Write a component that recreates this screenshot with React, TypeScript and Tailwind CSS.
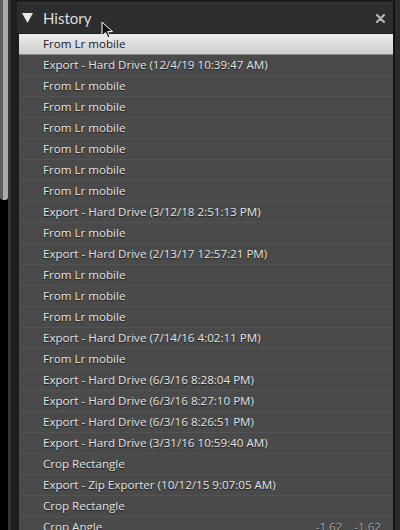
import React from "react";

const rows: { t: string; v?: [string, string] }[] = [
  { t: "From Lr mobile" },
  { t: "Export - Hard Drive (12/4/19 10:39:47 AM)" },
  { t: "From Lr mobile" },
  { t: "From Lr mobile" },
  { t: "From Lr mobile" },
  { t: "From Lr mobile" },
  { t: "From Lr mobile" },
  { t: "From Lr mobile" },
  { t: "Export - Hard Drive (3/12/18 2:51:13 PM)" },
  { t: "From Lr mobile" },
  { t: "Export - Hard Drive (2/13/17 12:57:21 PM)" },
  { t: "From Lr mobile" },
  { t: "From Lr mobile" },
  { t: "From Lr mobile" },
  { t: "Export - Hard Drive (7/14/16 4:02:11 PM)" },
  { t: "From Lr mobile" },
  { t: "Export - Hard Drive (6/3/16 8:28:04 PM)" },
  { t: "Export - Hard Drive (6/3/16 8:27:10 PM)" },
  { t: "Export - Hard Drive (6/3/16 8:26:51 PM)" },
  { t: "Export - Hard Drive (3/31/16 10:59:40 AM)" },
  { t: "Crop Rectangle" },
  { t: "Export - Zip Exporter (10/12/15 9:07:05 AM)" },
  { t: "Crop Rectangle" },
  { t: "Crop Angle", v: ["-1.62", "-1.62"] },
];

export default function App() {
  return (
    <div
      className="relative flex w-[400px] h-[530px] overflow-hidden bg-[#262626]"
      style={{ fontFamily: '"Open Sans", Lato, sans-serif' }}
    >
      {/* left scrollbar strip */}
      <div className="flex w-[17px] shrink-0">
        <div className="w-[8px] flex flex-col bg-black">
          <div className="h-[200px] shrink-0 flex rounded-b-[3px] overflow-hidden">
            <div className="w-[3px] bg-[#5e5e5e]" />
            <div className="w-[5px] bg-[#ababab]" />
          </div>
        </div>
        <div className="w-[3px] bg-[#353535]" />
        <div className="w-[6px] bg-[#1e1e1e]" />
      </div>

      {/* main panel */}
      <div className="flex flex-col w-[376px] shrink-0 min-h-0">
        <div className="h-[2px] shrink-0 bg-[#1a1a1a]" />
        <div className="h-[1px] shrink-0 bg-[#3a3a3a]" />
        <div className="h-[30px] shrink-0 bg-[#2d2d2d] flex items-center pl-[4px] pr-[8px]">
          <svg width="11" height="10" viewBox="0 0 11 10" className="ml-[1px]">
            <polygon points="0,0 11,0 5.5,10" fill="#e8e8e8" />
          </svg>
          <span
            className="ml-[10px] text-[15px] text-[#dcdcdc] leading-none"
            style={{ fontFamily: 'Lato, "Open Sans", sans-serif' }}
          >
            History
          </span>
          <div className="flex-1" />
          <svg width="9" height="9" viewBox="0 0 9 9">
            <path d="M1 1 L8 8 M8 1 L1 8" stroke="#b5b5b5" strokeWidth="2.2" strokeLinecap="round" />
          </svg>
        </div>
        <div className="flex-1 min-h-0 overflow-hidden border-t border-l-[2px] border-[#1c1c1c] bg-[#4a4a4a] flex flex-col">
          {rows.map((r, i) =>
            i === 0 ? (
              <div
                key={i}
                className="h-[21px] shrink-0 flex items-center pl-[24px] bg-gradient-to-b from-[#ececec] to-[#cfcfcf] border-b border-[#8a8a8a] text-[11.6px] text-[#1a1a1a]"
              >
                {r.t}
              </div>
            ) : (
              <div
                key={i}
                className="h-[21px] shrink-0 flex items-center pl-[24px] pr-[12px] text-[11.6px] text-[#e6e6e6] border-b border-[#535353] [text-shadow:0_1px_1px_#1a1a1a]"
              >
                <span className="flex-1">{r.t}</span>
                {r.v && (
                  <span className="flex gap-[12px] text-[#a8a8a8]">
                    <span>{r.v[0]}</span>
                    <span>{r.v[1]}</span>
                  </span>
                )}
              </div>
            )
          )}
        </div>
      </div>

      {/* right edge */}
      <div className="flex w-[7px] shrink-0">
        <div className="w-[2px] bg-[#121212]" />
        <div className="flex-1 bg-[#2b2b2b]" />
      </div>

      {/* mouse cursor */}
      <svg
        className="absolute left-[101px] top-[21px]"
        width="13"
        height="19"
        viewBox="0 0 13 19"
      >
        <path
          d="M1 1 L1 15 L4.5 11.5 L7 17 L9 16 L6.6 10.6 L11.5 10.6 Z"
          fill="#111"
          stroke="#fff"
          strokeWidth="1"
          strokeLinejoin="round"
        />
      </svg>
    </div>
  );
}
